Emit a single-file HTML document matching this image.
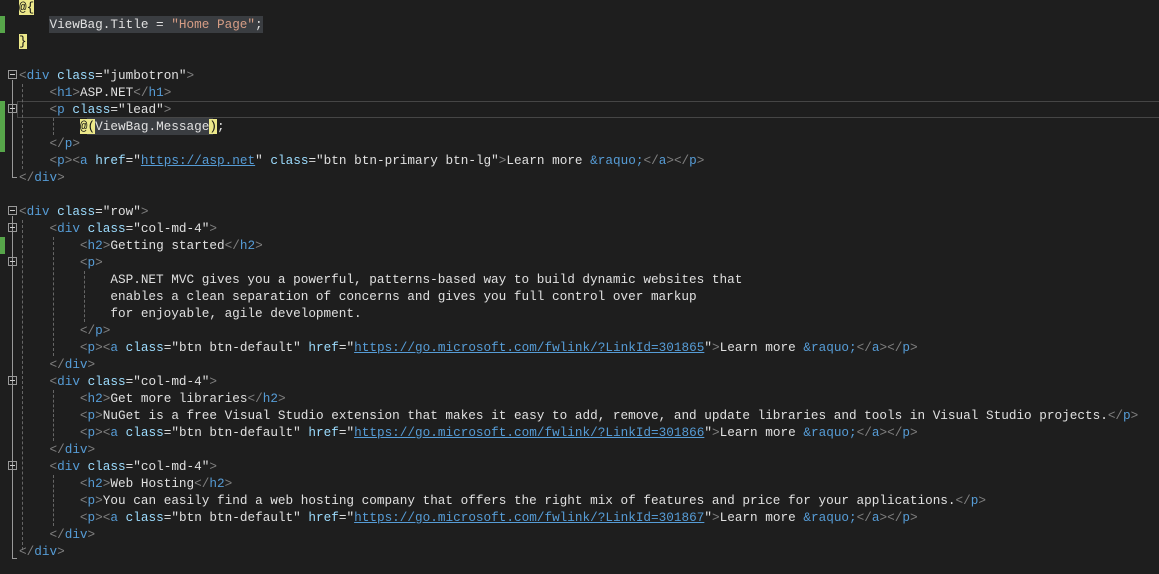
<!DOCTYPE html>
<html><head><meta charset="utf-8"><style>
body{margin:0;width:1159px;height:574px;background:#1e1e1e;overflow:hidden;position:relative;font-family:"Liberation Mono",monospace;font-size:12.7px;}
.l{position:absolute;left:19px;height:17px;line-height:17px;white-space:pre;color:#e0e0e0;}
.b{color:#808080}.t{color:#569cd6}.a{color:#9cdcfe}.v{color:#c8c8c8}.s{color:#d69d85}
.u{text-decoration:underline;color:#569cd6}
.r{background:#ece88a;color:#111}
.g{position:absolute;left:0;width:5px;background:#57a64a}
.bx{position:absolute;left:8px;width:7px;height:7px;border:1px solid #999;}
.bx:after{content:"";position:absolute;left:1px;top:3px;width:5px;height:1px;background:#ccc}
.vl{position:absolute;left:12px;width:1px;background:#999}
.ig{position:absolute;width:0;border-left:1px dashed #666}
</style></head><body>
<div style="position:absolute;left:49px;top:16px;width:214px;height:17px;background:#3a3d41"></div>
<div style="position:absolute;left:17px;top:101px;width:1142px;height:15px;border:1px solid #464646"></div>
<div style="position:absolute;left:87px;top:118px;width:126px;height:17px;background:#3a3d41"></div>
<div class="g" style="top:16px;height:17px"></div>
<div class="g" style="top:101px;height:51px"></div>
<div class="g" style="top:237px;height:17px"></div>

<div class="bx" style="top:70px"></div><div class="vl" style="top:80px;height:98px"></div><div style="position:absolute;left:12px;top:177px;width:5px;height:1px;background:#999"></div>
<div class="bx" style="top:104px"></div>
<div class="bx" style="top:206px"></div><div class="vl" style="top:216px;height:343px"></div><div style="position:absolute;left:12px;top:558px;width:5px;height:1px;background:#999"></div>
<div class="bx" style="top:223px"></div>
<div class="bx" style="top:257px"></div>
<div class="bx" style="top:376px"></div>
<div class="bx" style="top:461px"></div>

<div class="ig" style="left:22px;top:84px;height:85px"></div>
<div class="ig" style="left:53px;top:118px;height:17px"></div>
<div class="ig" style="left:22px;top:220px;height:330px"></div>
<div class="ig" style="left:53px;top:237px;height:119px"></div>
<div class="ig" style="left:84px;top:271px;height:51px"></div>
<div class="ig" style="left:53px;top:390px;height:51px"></div>
<div class="ig" style="left:53px;top:475px;height:51px"></div>

<div class="l" style="top:-1px"><span class="r">@{</span></div>
<div class="l" style="top:16px">    ViewBag.Title = <span class="s">"Home Page"</span>;</div>
<div class="l" style="top:33px"><span class="r">}</span></div>
<div class="l" style="top:67px"><span class="b">&lt;</span><span class="t">div</span> <span class="a">class</span>="jumbotron"<span class="b">&gt;</span></div>
<div class="l" style="top:84px">    <span class="b">&lt;</span><span class="t">h1</span><span class="b">&gt;</span>ASP.NET<span class="b">&lt;/</span><span class="t">h1</span><span class="b">&gt;</span></div>
<div class="l" style="top:101px">    <span class="b">&lt;</span><span class="t">p</span> <span class="a">class</span>="lead"<span class="b">&gt;</span></div>
<div class="l" style="top:118px">        <span class="r">@(</span>ViewBag.Message<span class="r">)</span>;</div>
<div class="l" style="top:135px">    <span class="b">&lt;/</span><span class="t">p</span><span class="b">&gt;</span></div>
<div class="l" style="top:152px">    <span class="b">&lt;</span><span class="t">p</span><span class="b">&gt;&lt;</span><span class="t">a</span> <span class="a">href</span>="<span class="u">https://asp.net</span>" <span class="a">class</span>="btn btn-primary btn-lg"<span class="b">&gt;</span>Learn more <span class="t">&amp;raquo;</span><span class="b">&lt;/</span><span class="t">a</span><span class="b">&gt;&lt;/</span><span class="t">p</span><span class="b">&gt;</span></div>
<div class="l" style="top:169px"><span class="b">&lt;/</span><span class="t">div</span><span class="b">&gt;</span></div>
<div class="l" style="top:203px"><span class="b">&lt;</span><span class="t">div</span> <span class="a">class</span>="row"<span class="b">&gt;</span></div>
<div class="l" style="top:220px">    <span class="b">&lt;</span><span class="t">div</span> <span class="a">class</span>="col-md-4"<span class="b">&gt;</span></div>
<div class="l" style="top:237px">        <span class="b">&lt;</span><span class="t">h2</span><span class="b">&gt;</span>Getting started<span class="b">&lt;/</span><span class="t">h2</span><span class="b">&gt;</span></div>
<div class="l" style="top:254px">        <span class="b">&lt;</span><span class="t">p</span><span class="b">&gt;</span></div>
<div class="l" style="top:271px">            ASP.NET MVC gives you a powerful, patterns-based way to build dynamic websites that</div>
<div class="l" style="top:288px">            enables a clean separation of concerns and gives you full control over markup</div>
<div class="l" style="top:305px">            for enjoyable, agile development.</div>
<div class="l" style="top:322px">        <span class="b">&lt;/</span><span class="t">p</span><span class="b">&gt;</span></div>
<div class="l" style="top:339px">        <span class="b">&lt;</span><span class="t">p</span><span class="b">&gt;&lt;</span><span class="t">a</span> <span class="a">class</span>="btn btn-default" <span class="a">href</span>="<span class="u">https://go.microsoft.com/fwlink/?LinkId=301865</span>"<span class="b">&gt;</span>Learn more <span class="t">&amp;raquo;</span><span class="b">&lt;/</span><span class="t">a</span><span class="b">&gt;&lt;/</span><span class="t">p</span><span class="b">&gt;</span></div>
<div class="l" style="top:356px">    <span class="b">&lt;/</span><span class="t">div</span><span class="b">&gt;</span></div>
<div class="l" style="top:373px">    <span class="b">&lt;</span><span class="t">div</span> <span class="a">class</span>="col-md-4"<span class="b">&gt;</span></div>
<div class="l" style="top:390px">        <span class="b">&lt;</span><span class="t">h2</span><span class="b">&gt;</span>Get more libraries<span class="b">&lt;/</span><span class="t">h2</span><span class="b">&gt;</span></div>
<div class="l" style="top:407px">        <span class="b">&lt;</span><span class="t">p</span><span class="b">&gt;</span>NuGet is a free Visual Studio extension that makes it easy to add, remove, and update libraries and tools in Visual Studio projects.<span class="b">&lt;/</span><span class="t">p</span><span class="b">&gt;</span></div>
<div class="l" style="top:424px">        <span class="b">&lt;</span><span class="t">p</span><span class="b">&gt;&lt;</span><span class="t">a</span> <span class="a">class</span>="btn btn-default" <span class="a">href</span>="<span class="u">https://go.microsoft.com/fwlink/?LinkId=301866</span>"<span class="b">&gt;</span>Learn more <span class="t">&amp;raquo;</span><span class="b">&lt;/</span><span class="t">a</span><span class="b">&gt;&lt;/</span><span class="t">p</span><span class="b">&gt;</span></div>
<div class="l" style="top:441px">    <span class="b">&lt;/</span><span class="t">div</span><span class="b">&gt;</span></div>
<div class="l" style="top:458px">    <span class="b">&lt;</span><span class="t">div</span> <span class="a">class</span>="col-md-4"<span class="b">&gt;</span></div>
<div class="l" style="top:475px">        <span class="b">&lt;</span><span class="t">h2</span><span class="b">&gt;</span>Web Hosting<span class="b">&lt;/</span><span class="t">h2</span><span class="b">&gt;</span></div>
<div class="l" style="top:492px">        <span class="b">&lt;</span><span class="t">p</span><span class="b">&gt;</span>You can easily find a web hosting company that offers the right mix of features and price for your applications.<span class="b">&lt;/</span><span class="t">p</span><span class="b">&gt;</span></div>
<div class="l" style="top:509px">        <span class="b">&lt;</span><span class="t">p</span><span class="b">&gt;&lt;</span><span class="t">a</span> <span class="a">class</span>="btn btn-default" <span class="a">href</span>="<span class="u">https://go.microsoft.com/fwlink/?LinkId=301867</span>"<span class="b">&gt;</span>Learn more <span class="t">&amp;raquo;</span><span class="b">&lt;/</span><span class="t">a</span><span class="b">&gt;&lt;/</span><span class="t">p</span><span class="b">&gt;</span></div>
<div class="l" style="top:526px">    <span class="b">&lt;/</span><span class="t">div</span><span class="b">&gt;</span></div>
<div class="l" style="top:543px"><span class="b">&lt;/</span><span class="t">div</span><span class="b">&gt;</span></div>
</body></html>
